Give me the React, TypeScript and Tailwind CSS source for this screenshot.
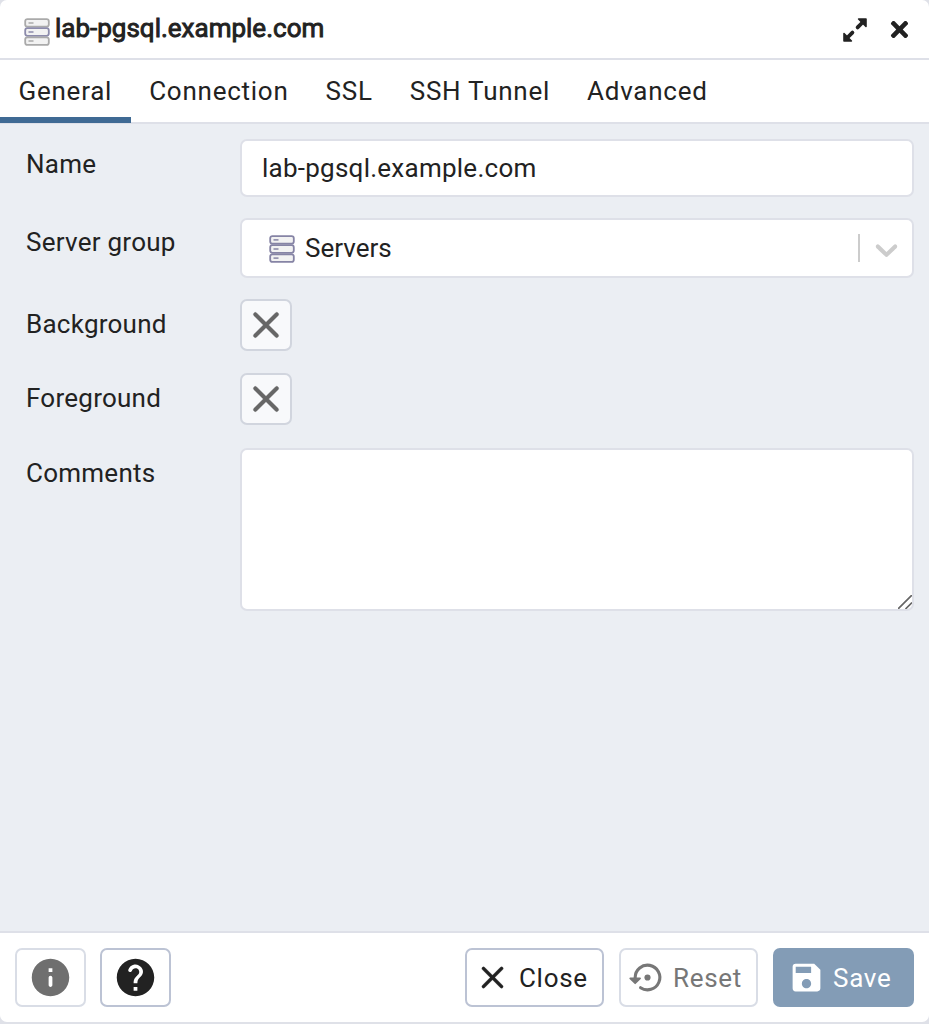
import { FaTimes } from "react-icons/fa";
import { MdSave } from "react-icons/md";

const tabs = ["General", "Connection", "SSL", "SSH Tunnel", "Advanced"];

type IconProps = { className?: string };

function ExpandIcon({ className }: IconProps) {
  return (
    <svg viewBox="0 0 24 24" fill="currentColor" stroke="currentColor" strokeLinejoin="round" strokeLinecap="round" className={className}>
      <path strokeWidth="1.6" d="M15.6 1h7.4v7.4zM1 15.6v7.4h7.4z" />
      <path strokeWidth="3.8" d="M14.6 9.4 20 4M9.4 14.6 4 20" />
    </svg>
  );
}

function CloseIcon({ className }: IconProps) {
  return (
    <svg viewBox="0 0 24 24" fill="currentColor" stroke="currentColor" strokeWidth="0.2" className={className}>
      <path d="M18.3 5.71a1 1 0 0 0-1.41 0L12 10.59 7.11 5.7A1 1 0 0 0 5.7 7.11L10.59 12 5.7 16.89a1 1 0 0 0 1.41 1.41L12 13.41l4.89 4.89a1 1 0 0 0 1.41-1.41L13.41 12l4.89-4.89a1 1 0 0 0 0-1.4z" />
    </svg>
  );
}

function InfoIcon({ className }: IconProps) {
  return (
    <svg viewBox="0 0 24 24" fill="currentColor" className={className}>
      <path d="M12 2C6.48 2 2 6.48 2 12s4.48 10 10 10 10-4.48 10-10S17.52 2 12 2zm0 15c-.55 0-1-.45-1-1v-4c0-.55.45-1 1-1s1 .45 1 1v4c0 .55-.45 1-1 1zm1-8h-2V7h2v2z" />
    </svg>
  );
}

function HelpIcon({ className }: IconProps) {
  return (
    <svg viewBox="0 0 24 24" fill="currentColor" className={className}>
      <path d="M12 2C6.48 2 2 6.48 2 12s4.48 10 10 10 10-4.48 10-10S17.52 2 12 2zm1 17h-2v-2h2v2zm2.07-7.75-.9.92c-.5.51-.86.97-1.04 1.69-.08.32-.13.68-.13 1.14h-2v-.5c0-.46.08-.9.22-1.31.2-.58.53-1.1.95-1.52l1.24-1.26c.46-.44.68-1.1.55-1.8-.13-.72-.69-1.33-1.39-1.53-1.11-.31-2.14.32-2.47 1.27-.12.37-.43.65-.82.65h-.3C8.4 9 8 8.44 8.16 7.88c.43-1.47 1.68-2.59 3.23-2.83 1.52-.24 2.97.55 3.87 1.8 1.18 1.63.83 3.38-.19 4.4z" />
    </svg>
  );
}

function ResetIcon({ className }: IconProps) {
  return (
    <svg viewBox="0 0 24 24" fill="none" className={className}>
      <path d="M4 12.5V12a8 8 0 1 1 3.5 6.6" stroke="currentColor" strokeWidth="2" strokeLinecap="round" />
      <path d="M.8 12h6.4c.5 0 .7.5.4.9l-3.2 3.2a.5.5 0 0 1-.8 0L.4 12.9c-.3-.4-.1-.9.4-.9z" fill="currentColor" />
      <circle cx="12" cy="12" r="2" fill="currentColor" />
    </svg>
  );
}

// Stack of three server units, one stroke colour per unit
function ServerIcon({ colors, className }: IconProps & { colors: string[] }) {
  return (
    <svg viewBox="0 0 26 28" fill="none" className={className}>
      {colors.map((color, i) => (
        <g key={i} stroke={color} strokeWidth="1.8">
          <rect x="1.2" y={1.1 + i * 9.1} width="23.6" height="7.6" rx="2.2" fill="#f2f2f2" />
          <path d={`M4.5 ${4.9 + i * 9.1}h5`} strokeWidth="1.5" />
        </g>
      ))}
    </svg>
  );
}

function ColorButton() {
  return (
    <button className="flex h-[52px] w-[52px] items-center justify-center rounded-[7px] border-2 border-[#d1d5de] bg-[#f8f9fb]">
      <CloseIcon className="h-[46px] w-[46px] shrink-0 text-[#666]" />
    </button>
  );
}

export default function App() {
  return (
    <div className="h-[1024px] w-[929px] bg-[#dfe1e8] font-['Roboto',sans-serif] text-[26px] leading-8 text-[#222]">
      <div className="flex h-[1022px] flex-col overflow-hidden rounded-[7px] bg-white">
        {/* Title bar */}
        <header className="flex h-[60px] shrink-0 items-center border-b-2 border-[#dee0e8] pr-[17px] pl-6">
          <ServerIcon colors={["#aaa", "#8c8bab", "#aaa"]} className="mt-[5px] h-7 w-[26px]" />
          <h1 className="-mt-[2px] ml-[5px] flex-1 [-webkit-text-stroke:0.9px_#222]">lab-pgsql.example.com</h1>
          <ExpandIcon className="mt-[1px] h-6 w-6" />
          <FaTimes className="mt-[1px] ml-5 h-[25px] w-[25px]" />
        </header>

        {/* Tabs */}
        <nav className="flex h-[64px] shrink-0 border-b-2 border-[#dee0e8] tracking-[0.75px]">
          {tabs.map((tab, i) => (
            <button
              key={tab}
              className={
                i === 0
                  ? "-mb-[1px] border-b-[6px] border-[#3f6a94] px-[18.5px] pt-[5px]"
                  : "-mb-[1px] border-b-[6px] border-transparent px-[18.5px] pt-[5px]"
              }
            >
              {tab}
            </button>
          ))}
        </nav>

        {/* Form */}
        <main className="grid flex-1 grid-cols-[214px_674px] grid-rows-[58px_60px_53px_54px_163px] content-start gap-y-[21px] bg-[#ebeef3] pt-[15px] pl-[26px] tracking-[0.25px]">
          <label className="pt-[9px]">Name</label>
          <input
            className="rounded-[7px] border-2 border-[#dee0e8] bg-white px-5 tracking-[0.25px]"
            defaultValue="lab-pgsql.example.com"
          />

          <label className="pt-[8px]">Server group</label>
          <div className="flex items-center rounded-[7px] border-2 border-[#dee0e8] bg-white pr-[7px] pl-[27px]">
            <ServerIcon colors={["#8684a5", "#8684a5", "#8684a5"]} className="mt-[2px] h-7 w-[26px]" />
            <span className="ml-[10px] flex-1 tracking-normal">Servers</span>
            <span className="h-7 w-[2px] bg-[#ccc]" />
            <svg viewBox="0 0 20 20" fill="#ccc" className="mt-[2px] ml-[8px] h-[37px] w-[37px]">
              <path d="M4.516 7.548c0.436-0.446 1.043-0.481 1.576 0l3.908 3.747 3.908-3.747c0.533-0.481 1.141-0.446 1.574 0 0.436 0.445 0.408 1.197 0 1.615-0.406 0.418-4.695 4.502-4.695 4.502-0.217 0.223-0.502 0.335-0.787 0.335s-0.57-0.112-0.789-0.335c0 0-4.287-4.084-4.695-4.502s-0.436-1.17 0-1.615z" />
            </svg>
          </div>

          <label className="pt-[9px]">Background</label>
          <ColorButton />

          <label className="pt-[9px]">Foreground</label>
          <ColorButton />

          <label className="pt-[9px]">Comments</label>
          <div className="flex items-end justify-end overflow-hidden rounded-[7px] border-2 border-[#dee0e8] bg-white">
            <svg viewBox="0 0 14 14" stroke="#666" strokeWidth="1.7" className="h-[14px] w-[14px]">
              <path d="M0 14 14 0M7.5 14 14 7.5" />
            </svg>
          </div>
        </main>

        {/* Footer */}
        <footer className="flex h-[91px] shrink-0 items-start border-t-2 border-[#dee0e8] px-[15px] pt-[15px] tracking-[0.7px]">
          <button className="flex h-[59px] w-[71px] items-center justify-center rounded-[7px] border-2 border-[#d9dde6] text-[#6f6f6f]">
            <InfoIcon className="h-[45px] w-[45px]" />
          </button>
          <button className="ml-[14px] flex h-[59px] w-[71px] items-center justify-center rounded-[7px] border-2 border-[#bcc3d4]">
            <HelpIcon className="h-[45px] w-[45px]" />
          </button>
          <button className="ml-auto flex h-[59px] w-[139px] items-center rounded-[7px] border-2 border-[#bcc3d4] pl-[6px]">
            <CloseIcon className="h-[39px] w-[39px]" />
            <span className="ml-[7px]">Close</span>
          </button>
          <button className="ml-[15px] flex h-[59px] w-[139px] items-center rounded-[7px] border-2 border-[#d9dde6] pl-[8px] text-[#777]">
            <ResetIcon className="h-[37px] w-[37px]" />
            <span className="ml-[7px]">Reset</span>
          </button>
          <button className="ml-[15px] flex h-[59px] w-[141px] items-center rounded-[7px] bg-[#839cb6] pl-[15px] text-white">
            <MdSave className="h-[37px] w-[37px]" />
            <span className="ml-[8px]">Save</span>
          </button>
        </footer>
      </div>
    </div>
  );
}
